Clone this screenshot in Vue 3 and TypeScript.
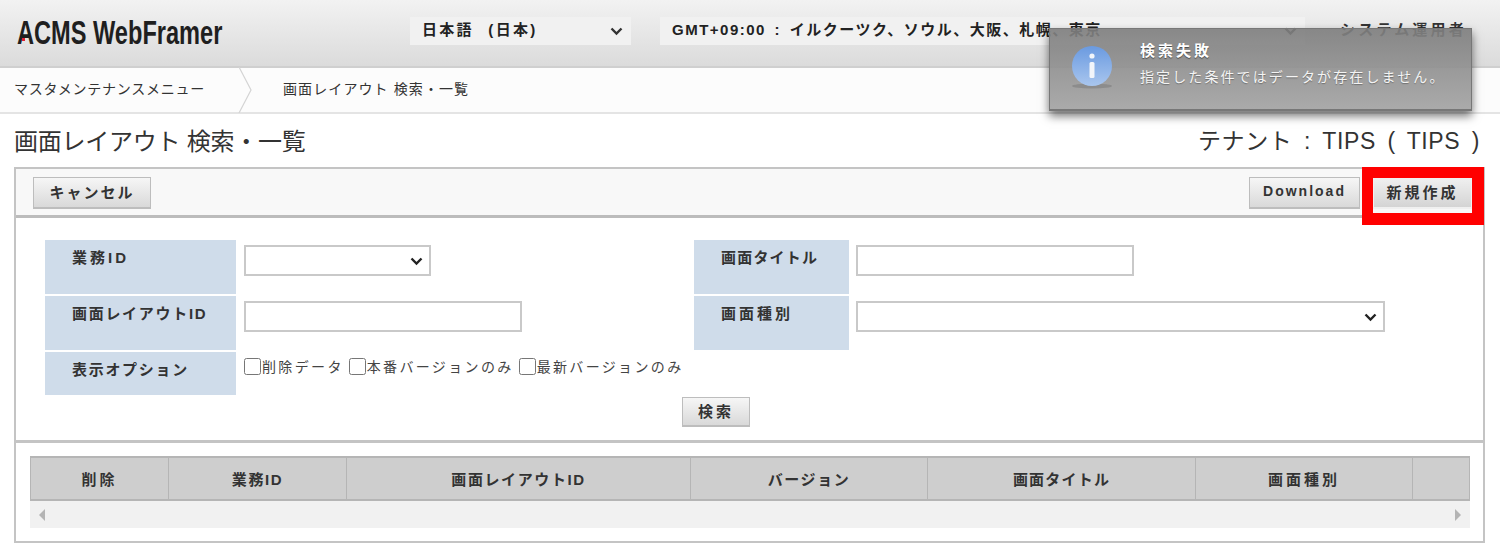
<script setup lang="ts">
const cols = [
  { label: '削除', w: 138, cls: 'wide' },
  { label: '業務ID', w: 178, cls: 'mid' },
  { label: '画面レイアウトID', w: 344, cls: 'mid' },
  { label: 'バージョン', w: 237, cls: 'mid' },
  { label: '画面タイトル', w: 268, cls: 'tight' },
  { label: '画面種別', w: 217, cls: 'wide' },
  { label: '', w: 57, cls: '' },
]
const options = ['削除データ', '本番バージョンのみ', '最新バージョンのみ']
</script>

<template>
  <div class="page">
    <header class="top">
      <div class="logo"><span class="logo-text">ACMS WebFramer</span><i class="logo-dot"></i></div>
      <span class="sel lang">
        <select class="top-select"><option>日本語 (日本)</option></select>
        <svg class="arrow" width="13" height="9" viewBox="0 0 13 9"><path d="M1.5 1.5 L6.5 6.5 L11.5 1.5" fill="none" stroke="#333" stroke-width="2.4" /></svg>
      </span>
      <span class="sel tz">
        <select class="top-select"><option>GMT+09:00 : イルクーツク、ソウル、大阪、札幌、東京</option></select>
        <svg class="arrow" width="13" height="9" viewBox="0 0 13 9"><path d="M1.5 1.5 L6.5 6.5 L11.5 1.5" fill="none" stroke="#333" stroke-width="2.4" /></svg>
      </span>
      <div class="role">システム運用者</div>
    </header>
    <nav class="crumbs">
      <span class="crumb first">マスタメンテナンスメニュー</span>
      <svg class="chev" width="16" height="46" viewBox="0 0 16 46"><path d="M1 0 L13 23 L1 46" fill="none" stroke="#d4d4d4" stroke-width="1.2" /></svg>
      <span class="crumb second">画面レイアウト 検索・一覧</span>
    </nav>
    <div class="title-row">
      <h1>画面レイアウト 検索・一覧</h1>
      <div class="tenant">テナント : TIPS ( TIPS )</div>
    </div>
    <section class="panel">
      <div class="toolbar">
        <button class="btn cancel">キャンセル</button>
        <div class="toolbar-right">
          <button class="btn dl">Download</button>
          <button class="btn create">新規作成</button>
        </div>
      </div>
      <div class="form">
        <div class="grid">
          <div class="label wide-id">業務ID</div>
          <div class="cell">
            <span class="sel s1">
              <select class="field"><option></option></select>
              <svg class="arrow" width="13" height="9" viewBox="0 0 13 9"><path d="M1.5 1.5 L6.5 6.5 L11.5 1.5" fill="none" stroke="#222" stroke-width="2.4" /></svg>
            </span>
          </div>
          <div class="label tight">画面タイトル</div>
          <div class="cell"><input class="field i1" type="text" /></div>
          <div class="label mid">画面レイアウトID</div>
          <div class="cell"><input class="field i1" type="text" /></div>
          <div class="label wide">画面種別</div>
          <div class="cell">
            <span class="sel s2">
              <select class="field"><option></option></select>
              <svg class="arrow" width="13" height="9" viewBox="0 0 13 9"><path d="M1.5 1.5 L6.5 6.5 L11.5 1.5" fill="none" stroke="#222" stroke-width="2.4" /></svg>
            </span>
          </div>
          <div class="label mid opt">表示オプション</div>
          <div class="cell checks">
            <label v-for="o in options" :key="o" class="check"><input type="checkbox" />{{ o }}</label>
          </div>
        </div>
        <div class="search-row"><button class="btn search">検索</button></div>
      </div>
      <div class="results">
        <table>
          <thead>
            <tr><th v-for="c in cols" :key="c.label" :class="c.cls" :style="{ width: c.w + 'px' }">{{ c.label }}</th></tr>
          </thead>
        </table>
        <div class="scroll">
          <svg width="8" height="12" viewBox="0 0 8 12"><path d="M7 0 V12 L1 6 Z" fill="#b4b4b4" /></svg>
          <svg width="8" height="12" viewBox="0 0 8 12"><path d="M1 0 V12 L7 6 Z" fill="#b4b4b4" /></svg>
        </div>
      </div>
    </section>

    <div class="toast">
      <svg class="info" width="44" height="46" viewBox="0 0 44 46">
        <defs>
          <linearGradient id="ig" x1="0" y1="0" x2="0" y2="1">
            <stop offset="0" stop-color="#6a9ae0" />
            <stop offset="1" stop-color="#a9c6ee" />
          </linearGradient>
        </defs>
        <ellipse cx="22" cy="41" rx="20" ry="2.5" fill="#777" opacity="0.5" />
        <circle cx="22" cy="21" r="20" fill="url(#ig)" />
        <circle cx="22" cy="11" r="2.6" fill="#f2f5fa" />
        <rect x="19.5" y="17" width="5" height="16" rx="1.5" fill="#f2f5fa" />
      </svg>
      <div class="toast-text">
        <div class="toast-title">検索失敗</div>
        <div class="toast-msg">指定した条件ではデータが存在しません。</div>
      </div>
    </div>
    <div class="mark"></div>
  </div>
</template>

<style>
html, body { margin: 0; background: #fff; }
</style>

<style scoped>
.page {
  position: relative;
  width: 1500px;
  height: 548px;
  overflow: hidden;
  background: #fff;
  color: #333;
  font-family: "Liberation Sans", "Noto Sans CJK JP", sans-serif;
}
.top {
  height: 66px;
  border-bottom: 2px solid #cfcfcf;
  background: linear-gradient(#f2f2f2, #dbdbdb);
  display: flex;
  align-items: flex-start;
}
.logo {
  position: relative;
  flex: none;
  width: 393px;
  padding: 17px 0 0 17px;
  box-sizing: border-box;
  font-weight: 700;
  font-size: 33px;
  line-height: 32px;
  color: #1f1f1f;
  white-space: nowrap;
}
.logo-text { display: inline-block; transform: scaleX(.715); transform-origin: left center; }
.logo-dot {
  position: absolute;
  left: 22px;
  top: 38px;
  width: 3px;
  height: 3px;
  background: #e02030;
}
.sel { position: relative; display: block; flex: none; }
.sel select { width: 100%; appearance: none; }
.arrow { position: absolute; right: 8px; top: 50%; margin-top: -4px; pointer-events: none; }
.lang { width: 221px; margin: 17px 29px 0 17px; }
.tz { width: 645px; margin-top: 17px; }
.top-select {
  display: block;
  height: 28px;
  border: 0;
  background: #f1f1f1;
  color: #222;
  font: 700 15px "Liberation Sans", "Noto Sans CJK JP", sans-serif;
  letter-spacing: 1.5px;
  word-spacing: 3px;
  padding: 0 6px 3px 12px;
  outline: none;
}
.lang .top-select { letter-spacing: 2.3px; word-spacing: 8px; }
.role {
  margin: 20px 0 0 35px;
  font-size: 15px;
  font-weight: 700;
  line-height: 20px;
  color: #333;
  letter-spacing: 3.2px;
  white-space: nowrap;
}
.crumbs {
  height: 44px;
  background: #fcfcfc;
  border-bottom: 2px solid #e4e4e4;
  display: flex;
  align-items: center;
}
.crumb { font-size: 14px; color: #333; white-space: nowrap; padding-bottom: 4px; }
.first { margin-left: 14px; width: 224px; letter-spacing: .75px; }
.second { letter-spacing: 1.1px; }
.chev { flex: none; margin-right: 29px; }
.title-row {
  height: 53px;
  box-sizing: border-box;
  display: flex;
  align-items: center;
  justify-content: space-between;
  padding: 0 20px 3px 14px;
}
h1 {
  margin: 0;
  font-size: 24px;
  font-weight: 400;
  letter-spacing: -.25px;
  color: #333;
}
.tenant { font-size: 23px; color: #333; white-space: nowrap; word-spacing: 4.5px; letter-spacing: .6px; }
.panel {
  margin: 0 15px 0 14px;
  height: 376px;
  box-sizing: border-box;
  border: 2px solid #c4c4c4;
  display: flex;
  flex-direction: column;
}
.toolbar {
  height: 49px;
  flex: none;
  box-sizing: border-box;
  background: #f8f8f8;
  border-bottom: 3px solid #bcbcbc;
  display: flex;
  justify-content: space-between;
  padding: 8px 0 0 17px;
}
.toolbar-right { display: flex; }
.btn {
  height: 32px;
  box-sizing: border-box;
  border: 1px solid #bdbdbd;
  border-bottom-width: 2px;
  background: linear-gradient(#f6f6f6, #d9d9d9);
  color: #333;
  font: 700 15px "Liberation Sans", "Noto Sans CJK JP", sans-serif;
  letter-spacing: 2px;
  padding: 0 0 3px;
  cursor: pointer;
}
.cancel { width: 118px; }
.dl { width: 111px; margin-right: 13px; font-size: 14px; }
.create { width: 99px; margin-right: 11px; letter-spacing: 3px; border-color: #f0f0f0; background: linear-gradient(#f0f0f0, #d4d4d4); }
.form {
  flex: none;
  height: 225px;
  box-sizing: border-box;
  border-bottom: 3px solid #c4c4c4;
  padding: 22px 0 0 29px;
}
.grid {
  display: grid;
  grid-template-columns: 191px 458px 155px auto;
  grid-template-rows: 54px 54px 43px;
  row-gap: 2px;
  justify-content: start;
}
.label {
  background: #cfdcea;
  font-size: 15px;
  font-weight: 700;
  line-height: 20px;
  padding: 8px 0 0 27px;
  box-sizing: border-box;
  color: #333;
  white-space: nowrap;
}
.tight { letter-spacing: 1.2px; }
.mid { letter-spacing: 1.7px; }
.wide { letter-spacing: 3px; }
.wide-id { letter-spacing: 3px; }
.opt { padding-top: 8px; }
th.mid { letter-spacing: 1.6px; }
.cell { padding: 5px 0 0 8px; box-sizing: border-box; }
.cell:nth-child(4), .cell:nth-child(8) { padding-left: 7px; }
.field {
  height: 31px;
  box-sizing: border-box;
  border: 2px solid #c9c9c9;
  background: #fff;
  outline: none;
  display: block;
}
.s1 { width: 187px; }
.i1 { width: 278px; }
.s2 { width: 529px; }
.checks {
  grid-column: 2 / 5;
  display: flex;
  padding-top: 2px;
  font-size: 14px;
  color: #444;
  letter-spacing: 2.35px;
}
.check { display: flex; align-items: flex-start; white-space: nowrap; line-height: 26px; margin-right: 5px; }
.check input { width: 17px; height: 17px; margin: 4px 1px 0 0; flex: none; }
.search-row { margin-top: 2px; padding-left: 637px; }
.search { width: 68px; height: 30px; letter-spacing: 3px; }
.results { padding: 13px 14px 0 14px; }
table {
  border-collapse: collapse;
  table-layout: fixed;
  width: 1439px;
  background: #cecece;
}
th {
  height: 43px;
  box-sizing: border-box;
  padding: 0;
  background: #cecece;
  border: 1px solid #b5b5b5;
  border-bottom-width: 2px;
  border-top-width: 2px;
  font-size: 15px;
  font-weight: 700;
  color: #333;
}
.scroll {
  width: 1440px;
  height: 27px;
  background: #f1f1f1;
  display: flex;
  align-items: center;
  justify-content: space-between;
  padding: 0 8px;
  box-sizing: border-box;
}
.toast {
  position: absolute;
  left: 1049px;
  top: 28px;
  width: 423px;
  height: 83px;
  box-sizing: border-box;
  background: linear-gradient(rgba(125,125,125,.9), rgba(165,165,165,.94));
  border: 1px solid #777;
  border-bottom-width: 2px;
  box-shadow: 0 5px 9px rgba(0,0,0,.55);
  display: flex;
  padding: 16px 0 0 20px;
}
.info { flex: none; margin-right: 26px; }
.toast-text { color: #fff; font-size: 14px; line-height: 20px; white-space: nowrap; }
.toast-title { font-size: 15px; font-weight: 700; letter-spacing: 3px; margin-top: -4px; margin-bottom: 6px; text-shadow: 0 1px 1px rgba(0,0,0,.5); }
.toast-msg { color: #f4f4f4; letter-spacing: 2.1px; text-shadow: 0 1px 1px rgba(0,0,0,.3); }
.mark {
  position: absolute;
  left: 1362px;
  top: 167px;
  width: 122px;
  height: 58px;
  box-sizing: border-box;
  border: 11px solid #f00;
  border-right-width: 12px;
  border-bottom-width: 12px;
  pointer-events: none;
}
</style>
